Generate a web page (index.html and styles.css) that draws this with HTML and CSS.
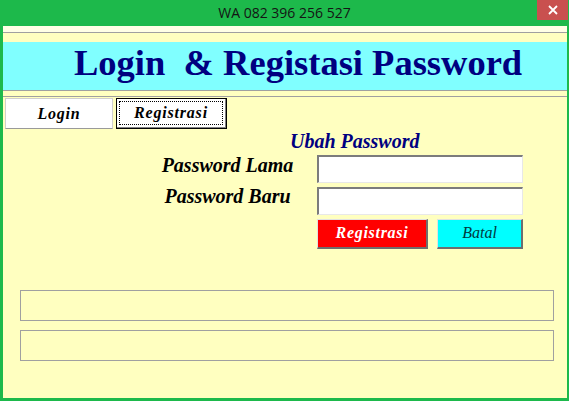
FILE: index.html
```html
<!DOCTYPE html>
<html>
<head>
<meta charset="utf-8">
<link rel="stylesheet" href="styles.css">
</head>
<body>
<div class="window">
  <div class="titlebar">
    <span class="title">WA 082 396 256 527</span>
    <div class="close">
      <svg width="10" height="10" viewBox="0 0 10 10"><path d="M1 1 L9 9 M9 1 L1 9" stroke="#fff" stroke-width="1.8" fill="none"/></svg>
    </div>
  </div>
  <div class="client">
    <div class="topstrip"></div>
    <div class="banner"><h1 class="banner-title">Login&nbsp; &amp; Registasi Password</h1></div>
    <div class="tabbar">
      <div class="tab">Login</div>
      <div class="tab tab-active"><span class="focus">Registrasi</span></div>
    </div>
    <div class="subtitle">Ubah Password</div>
    <div class="form-grid">
      <div class="label">Password Lama</div>
      <div class="field"></div>
      <div class="label label-baru">Password Baru</div>
      <div class="field"></div>
      <div></div>
      <div class="buttons">
        <div class="btn btn-red">Registrasi</div>
        <div class="btn btn-cyan">Batal</div>
      </div>
    </div>
    <div class="box box-first"></div>
    <div class="box"></div>
  </div>
</div>
</body>
</html>
```

FILE: styles.css
```css
html, body {
  margin: 0;
  padding: 0;
  overflow: hidden;
}
body {
  width: 569px;
  height: 401px;
  background: #1db94b;
}
.window {
  width: 569px;
  height: 401px;
  background: #1db94b;
  display: flex;
  flex-direction: column;
}
.titlebar {
  position: relative;
  height: 26px;
  flex: none;
  text-align: center;
  font-family: "Open Sans", "Noto Sans", sans-serif;
  font-size: 14px;
  line-height: 26px;
  color: #141414;
}
.close {
  position: absolute;
  top: 0;
  right: 1px;
  width: 31px;
  height: 20px;
  background: #c9504f;
  display: flex;
  align-items: center;
  justify-content: center;
}
.close svg {
  display: block;
}
.client {
  flex: 1;
  margin: 0 2px 3px 3px;
  background: #ffffc0;
  display: flex;
  flex-direction: column;
}
.topstrip {
  height: 6px;
  background: #ffffe6;
  border-bottom: 1px solid #a0a0a0;
}
.banner {
  margin-top: 9px;
  height: 48px;
  background: #80ffff;
  border-bottom: 1px solid #a0a0a0;
  box-sizing: content-box;
}
.banner-title {
  margin: 0;
  padding-left: 71px;
  padding-top: 1px;
  font-family: "Liberation Serif", serif;
  font-weight: bold;
  font-size: 36.5px;
  line-height: 40px;
  color: #000080;
  white-space: nowrap;
}
.tabbar {
  margin-top: 5px;
  border-top: 1px solid #a0a0a0;
  padding: 1px 0 0 2px;
  display: flex;
  gap: 3px;
}
.tab {
  box-sizing: border-box;
  height: 31px;
  width: 108px;
  background: #ffffff;
  border: 1px solid #cfcfcf;
  border-bottom-color: #9a9a9a;
  font-family: "Liberation Serif", serif;
  font-weight: bold;
  font-style: italic;
  font-size: 16px;
  letter-spacing: 0.8px;
  line-height: 29px;
  text-align: center;
  color: #000;
}
.tab-active {
  width: 111px;
  border: 1px solid #000;
  box-shadow: inset -1px -1px 0 #808080;
  padding: 2px 3px 3px 2px;
  display: flex;
}
.focus {
  flex: 1;
  border: 1px dotted #000;
  line-height: 21px;
}
.subtitle {
  margin-top: 2px;
  padding-left: 287px;
  font-family: "Liberation Serif", serif;
  font-weight: bold;
  font-style: italic;
  font-size: 20px;
  line-height: 20px;
  color: #000080;
}
.form-grid {
  margin-top: 4px;
  padding-left: 152px;
  display: grid;
  grid-template-columns: 145px 206px;
  grid-template-rows: 28px 28px 30px;
  column-gap: 17px;
  row-gap: 4px;
}
.label {
  align-self: start;
  text-align: center;
  font-family: "Liberation Serif", serif;
  font-weight: bold;
  font-style: italic;
  font-size: 20px;
  line-height: 20px;
  color: #000;
  white-space: nowrap;
}
.label-baru {
  margin-top: -1px;
}
.field {
  box-sizing: border-box;
  background: #ffffff;
  border-top: 2px solid #7c7c7c;
  border-left: 2px solid #7c7c7c;
  border-right: 1px solid #e8e8e8;
  border-bottom: 1px solid #e8e8e8;
}
.buttons {
  display: flex;
  gap: 9px;
}
.btn {
  box-sizing: border-box;
  height: 30px;
  border-top: 1px solid #e0e0e0;
  border-left: 1px solid #e0e0e0;
  border-right: 2px solid #6e6e6e;
  border-bottom: 2px solid #6e6e6e;
  font-family: "Liberation Serif", serif;
  font-style: italic;
  font-size: 16px;
  line-height: 25px;
  text-align: center;
}
.btn-red {
  width: 111px;
  background: #ff0000;
  color: #ffffff;
  font-weight: bold;
  letter-spacing: 0.7px;
}
.btn-cyan {
  width: 86px;
  background: #00ffff;
  color: #003a40;
}
.box {
  box-sizing: border-box;
  height: 31px;
  margin: 9px 13px 0 17px;
  border: 1px solid #a0a0a0;
}
.box-first {
  margin-top: 41px;
}
```
